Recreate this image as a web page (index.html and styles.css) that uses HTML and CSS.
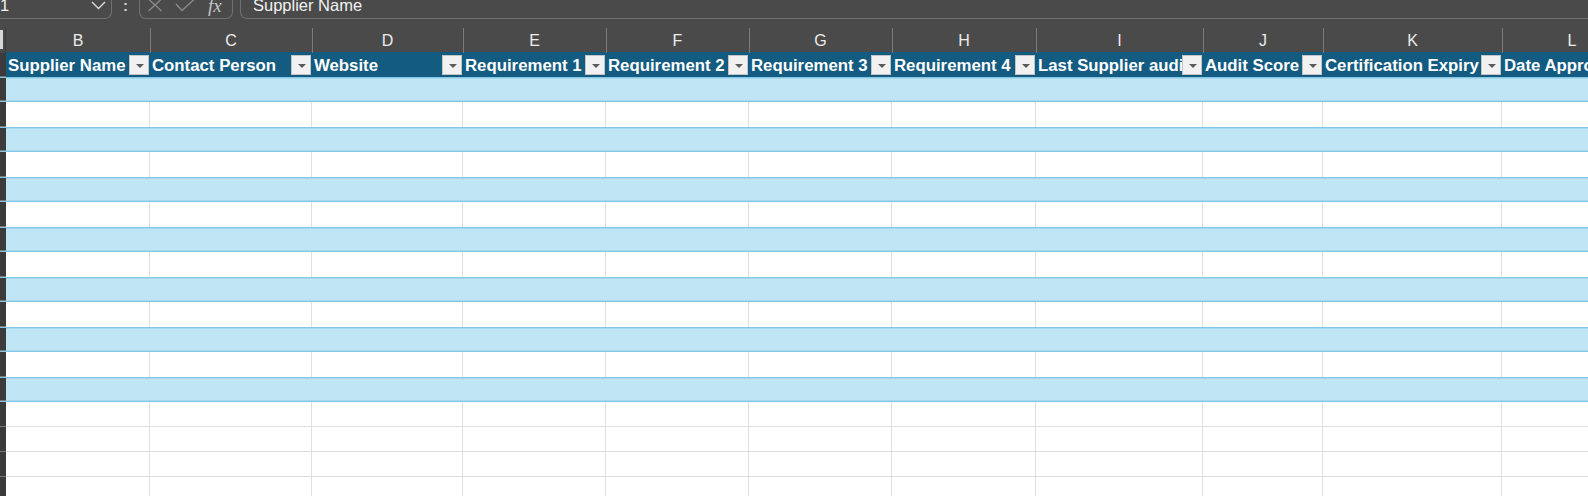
FILE: index.html
```html
<!DOCTYPE html>
<html>
<head>
<meta charset="utf-8">
<link rel="stylesheet" href="styles.css">
</head>
<body>
<div class="app">
  <div class="fbar">
    <div class="namebox"><span class="nb-text">1</span>
      <svg class="chev" width="15" height="10" viewBox="0 0 15 10"><path d="M1 2 L7.5 8.5 L14 2" fill="none" stroke="#dcdcdc" stroke-width="1.4"/></svg>
    </div>
    <div class="colon">:</div>
    <div class="fxbox">
      <svg class="ix" width="16" height="12" viewBox="0 0 16 12"><path d="M1.5 -1 L14.5 11 M14.5 -1 L1.5 11" stroke="#8c8c8c" stroke-width="1.3" fill="none"/></svg>
      <svg class="ic" width="20" height="12" viewBox="0 0 20 12"><path d="M1 4 L7 10.5 L19.5 -1" stroke="#8c8c8c" stroke-width="1.3" fill="none"/></svg>
      <span class="fx">fx</span>
    </div>
    <div class="formula">Supplier Name</div>
  </div>

  <div class="sheet">
    <div class="r colhead">
      <div class="corner"><span class="tri"></span></div>
      <div class="ch">B</div><div class="ch">C</div><div class="ch">D</div><div class="ch">E</div><div class="ch">F</div><div class="ch">G</div><div class="ch">H</div><div class="ch">I</div><div class="ch">J</div><div class="ch">K</div><div class="ch">L</div>
    </div>

    <div class="r thead">
      <div class="rh"></div>
      <div class="th"><span class="lbl">Supplier Name</span><span class="flt"></span></div>
      <div class="th"><span class="lbl">Contact Person</span><span class="flt"></span></div>
      <div class="th"><span class="lbl">Website</span><span class="flt"></span></div>
      <div class="th"><span class="lbl">Requirement 1</span><span class="flt"></span></div>
      <div class="th"><span class="lbl">Requirement 2</span><span class="flt"></span></div>
      <div class="th"><span class="lbl">Requirement 3</span><span class="flt"></span></div>
      <div class="th"><span class="lbl">Requirement 4</span><span class="flt"></span></div>
      <div class="th"><span class="lbl">Last Supplier audit</span><span class="flt"></span></div>
      <div class="th"><span class="lbl">Audit Score</span><span class="flt"></span></div>
      <div class="th"><span class="lbl">Certification Expiry</span><span class="flt"></span></div>
      <div class="th"><span class="lbl">Date Approved</span><span class="flt"></span></div>
    </div>

    <div class="r band"><div class="rh"></div><div class="c"></div><div class="c"></div><div class="c"></div><div class="c"></div><div class="c"></div><div class="c"></div><div class="c"></div><div class="c"></div><div class="c"></div><div class="c"></div><div class="c"></div></div>
    <div class="r plain"><div class="rh"></div><div class="c"></div><div class="c"></div><div class="c"></div><div class="c"></div><div class="c"></div><div class="c"></div><div class="c"></div><div class="c"></div><div class="c"></div><div class="c"></div><div class="c"></div></div>
    <div class="r band"><div class="rh"></div><div class="c"></div><div class="c"></div><div class="c"></div><div class="c"></div><div class="c"></div><div class="c"></div><div class="c"></div><div class="c"></div><div class="c"></div><div class="c"></div><div class="c"></div></div>
    <div class="r plain"><div class="rh"></div><div class="c"></div><div class="c"></div><div class="c"></div><div class="c"></div><div class="c"></div><div class="c"></div><div class="c"></div><div class="c"></div><div class="c"></div><div class="c"></div><div class="c"></div></div>
    <div class="r band"><div class="rh"></div><div class="c"></div><div class="c"></div><div class="c"></div><div class="c"></div><div class="c"></div><div class="c"></div><div class="c"></div><div class="c"></div><div class="c"></div><div class="c"></div><div class="c"></div></div>
    <div class="r plain"><div class="rh"></div><div class="c"></div><div class="c"></div><div class="c"></div><div class="c"></div><div class="c"></div><div class="c"></div><div class="c"></div><div class="c"></div><div class="c"></div><div class="c"></div><div class="c"></div></div>
    <div class="r band"><div class="rh"></div><div class="c"></div><div class="c"></div><div class="c"></div><div class="c"></div><div class="c"></div><div class="c"></div><div class="c"></div><div class="c"></div><div class="c"></div><div class="c"></div><div class="c"></div></div>
    <div class="r plain"><div class="rh"></div><div class="c"></div><div class="c"></div><div class="c"></div><div class="c"></div><div class="c"></div><div class="c"></div><div class="c"></div><div class="c"></div><div class="c"></div><div class="c"></div><div class="c"></div></div>
    <div class="r band"><div class="rh"></div><div class="c"></div><div class="c"></div><div class="c"></div><div class="c"></div><div class="c"></div><div class="c"></div><div class="c"></div><div class="c"></div><div class="c"></div><div class="c"></div><div class="c"></div></div>
    <div class="r plain"><div class="rh"></div><div class="c"></div><div class="c"></div><div class="c"></div><div class="c"></div><div class="c"></div><div class="c"></div><div class="c"></div><div class="c"></div><div class="c"></div><div class="c"></div><div class="c"></div></div>
    <div class="r band"><div class="rh"></div><div class="c"></div><div class="c"></div><div class="c"></div><div class="c"></div><div class="c"></div><div class="c"></div><div class="c"></div><div class="c"></div><div class="c"></div><div class="c"></div><div class="c"></div></div>
    <div class="r plain"><div class="rh"></div><div class="c"></div><div class="c"></div><div class="c"></div><div class="c"></div><div class="c"></div><div class="c"></div><div class="c"></div><div class="c"></div><div class="c"></div><div class="c"></div><div class="c"></div></div>
    <div class="r band"><div class="rh"></div><div class="c"></div><div class="c"></div><div class="c"></div><div class="c"></div><div class="c"></div><div class="c"></div><div class="c"></div><div class="c"></div><div class="c"></div><div class="c"></div><div class="c"></div></div>

    <div class="r empty"><div class="rh"></div><div class="c"></div><div class="c"></div><div class="c"></div><div class="c"></div><div class="c"></div><div class="c"></div><div class="c"></div><div class="c"></div><div class="c"></div><div class="c"></div><div class="c"></div></div>
    <div class="r empty"><div class="rh"></div><div class="c"></div><div class="c"></div><div class="c"></div><div class="c"></div><div class="c"></div><div class="c"></div><div class="c"></div><div class="c"></div><div class="c"></div><div class="c"></div><div class="c"></div></div>
    <div class="r empty"><div class="rh"></div><div class="c"></div><div class="c"></div><div class="c"></div><div class="c"></div><div class="c"></div><div class="c"></div><div class="c"></div><div class="c"></div><div class="c"></div><div class="c"></div><div class="c"></div></div>
    <div class="r empty"><div class="rh"></div><div class="c"></div><div class="c"></div><div class="c"></div><div class="c"></div><div class="c"></div><div class="c"></div><div class="c"></div><div class="c"></div><div class="c"></div><div class="c"></div><div class="c"></div></div>
  </div>
</div>
</body>
</html>
```

FILE: styles.css
```css
* { box-sizing: border-box; }
html, body { margin: 0; padding: 0; }
body {
  width: 1588px;
  height: 496px;
  overflow: hidden;
  background: #4a4a4a;
  font-family: "Liberation Sans", Arial, sans-serif;
}
.app { width: 1588px; height: 496px; overflow: hidden; }

/* formula bar */
.fbar {
  height: 19px;
  display: flex;
  align-items: stretch;
  background: #4a4a4a;
}
.namebox {
  width: 120px;
  margin-left: -8px;
  border: 1px solid #707070;
  border-top: none;
  border-radius: 0 0 7px 7px;
  display: flex;
  align-items: flex-start;
  justify-content: space-between;
  padding: 0 5px 0 7px;
  overflow: hidden;
}
.nb-text {
  color: #f0f0f0;
  font-size: 16.5px;
  line-height: 11px;
}
.chev { margin-top: 0; }
.colon {
  width: 27px;
  text-align: center;
  color: #d4d4d4;
  font-weight: bold;
  font-size: 15px;
  line-height: 12px;
}
.fxbox {
  width: 94px;
  border: 1px solid #707070;
  border-top: none;
  border-radius: 0 0 7px 7px;
  display: flex;
  align-items: flex-start;
  padding: 0 0 0 7px;
}
.ic { margin-left: 12px; }
.fx {
  margin-left: 13px;
  font-family: "Liberation Serif", serif;
  font-style: italic;
  color: #c4c4c4;
  font-size: 19px;
  line-height: 11px;
}
.formula {
  flex: 1;
  margin-left: 7px;
  margin-right: -10px;
  border: 1px solid #707070;
  border-top: none;
  border-radius: 0 0 0 7px;
  color: #f2f2f2;
  font-size: 16.5px;
  line-height: 11px;
  padding-left: 12px;
  white-space: nowrap;
}

/* sheet */
.sheet {
  margin-top: 8px;
  --cols: 6px 144px 162px 151px 143px 143px 143px 144px 167px 120px 179px 140px;
}
.r {
  display: grid;
  grid-template-columns: var(--cols);
  height: 25px;
}
.colhead { background: #4a4a4a; }
.corner { position: relative; background: #4a4a4a; border-right: 1px solid #3a3a3a; }
.tri {
  position: absolute;
  left: 0; top: 3px;
  width: 3px; height: 19px;
  background: #d8d8d8;
}
.ch {
  color: #ececec;
  font-size: 16px;
  line-height: 25px;
  padding-top: 1px;
  text-align: center;
  position: relative;
}
.ch + .ch::before {
  content: "";
  position: absolute;
  left: 0; top: 1px; bottom: 0;
  width: 1px;
  background: #7c7c7c;
}

.rh {
  background: #3b3b3b;
  border-bottom: 1px solid #7a7a7a;
}

.thead { background: #135b80; }
.th {
  display: flex;
  align-items: center;
  justify-content: space-between;
  padding: 0 1px 0 2px;
  overflow: hidden;
  min-width: 0;
}
.lbl {
  color: #ffffff;
  font-weight: bold;
  font-size: 16.8px;
  padding-top: 2px;
  white-space: nowrap;
  overflow: hidden;
  flex: 1;
  min-width: 0;
}
.flt {
  flex: none;
  width: 20px;
  height: 20px;
  background: #f1f1f1;
  border: 1px solid #c4c4c4;
  position: relative;
}
.flt::after {
  content: "";
  position: absolute;
  left: 5.5px; top: 8px;
  border-left: 4px solid transparent;
  border-right: 4px solid transparent;
  border-top: 4px solid #5a5a5a;
}

.band {
  background: #c0e6f5;
  border-top: 1px solid #86c8e3;
  border-bottom: 1px solid #86c8e3;
  box-shadow: inset 0 1px 0 #a4d8ee, inset 0 -1px 0 #a4d8ee;
}
.plain { background: #ffffff; }
.plain .c { border-right: 1px solid #e0e0e0; }
.empty { background: #ffffff; }
.empty .c { border-right: 1px solid #e0e0e0; border-bottom: 1px solid #dedede; }
.c { min-width: 0; }
```
